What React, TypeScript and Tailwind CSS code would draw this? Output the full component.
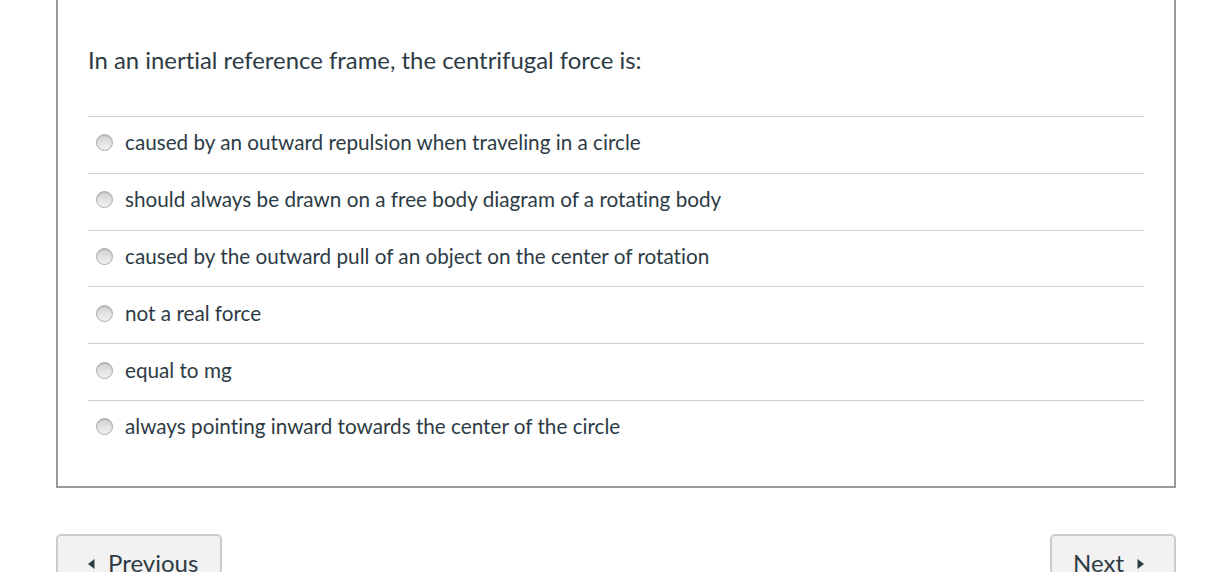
import React from "react";

const options = [
  "caused by an outward repulsion when traveling in a circle",
  "should always be drawn on a free body diagram of a rotating body",
  "caused by the outward pull of an object on the center of rotation",
  "not a real force",
  "equal to mg",
  "always pointing inward towards the center of the circle",
];

function Radio() {
  return (
    <span className="inline-block w-[17px] h-[17px] rounded-full border border-[#a9a9a9] bg-gradient-to-b from-[#d2d2d2] to-[#f2f2f2] shadow-[inset_0_1px_1px_rgba(0,0,0,0.15)] shrink-0" />
  );
}

export default function App() {
  return (
    <div
      className="w-[1226px] h-[572px] overflow-hidden bg-white text-[#2d3b45] [font-variant-ligatures:none]"
      style={{ fontFamily: "Lato, 'Noto Sans', sans-serif" }}
    >
      <div className="ml-[56px] w-[1120px] border-x-2 border-b-2 border-[#999999] px-[30px] pt-[43px] pb-[29px]">
        <div className="text-[23.9px] leading-[34px] mb-[39px]">
          In an inertial reference frame, the centrifugal force is:
        </div>
        <div>
          {options.map((o) => (
            <div
              key={o}
              className="h-[56.8px] border-t border-[#d0d0d0] flex items-center pl-[8px] pb-[4px] gap-[12px] text-[20.7px]"
            >
              <Radio />
              <span>{o}</span>
            </div>
          ))}
        </div>
      </div>
      <div className="ml-[56px] w-[1120px] mt-[46px] flex justify-between">
        <button className="h-[60px] w-[166px] rounded-[5px] border-2 border-[#c9cdd1] bg-[#f2f2f2] text-[24px] text-[#2d3b45] flex items-start pl-[30px] pt-[9px] gap-[13px]">
          <svg width="7" height="10" viewBox="0 0 7 10" className="mt-[14px] shrink-0">
            <path d="M6.5 0 L0 5 L6.5 10 Z" fill="#2d3b45" />
          </svg>
          <span>Previous</span>
        </button>
        <button className="h-[60px] w-[126px] rounded-[5px] border-2 border-[#c9cdd1] bg-[#f2f2f2] text-[24px] text-[#2d3b45] flex items-start pl-[21px] pt-[9px] gap-[13px]">
          <span>Next</span>
          <svg width="7" height="10" viewBox="0 0 7 10" className="mt-[14px] shrink-0">
            <path d="M0.5 0 L7 5 L0.5 10 Z" fill="#2d3b45" />
          </svg>
        </button>
      </div>
    </div>
  );
}
